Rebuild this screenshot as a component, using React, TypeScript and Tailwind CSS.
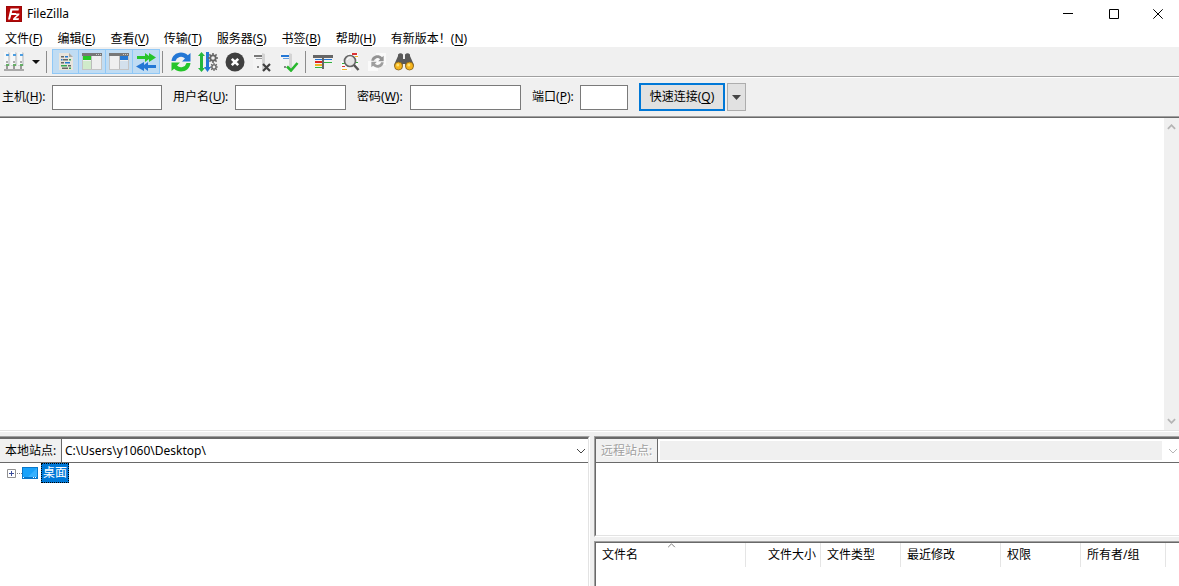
import type { ReactNode } from "react";

const menus = [
  ["文件", "F"],
  ["编辑", "E"],
  ["查看", "V"],
  ["传输", "T"],
  ["服务器", "S"],
  ["书签", "B"],
  ["帮助", "H"],
  ["有新版本！", "N"],
];

function Key({ label, k, colon = false }: { label: string; k: string; colon?: boolean }) {
  return (
    <span className="whitespace-nowrap">
      {label}(<span className="underline underline-offset-2">{k}</span>){colon && ":"}
    </span>
  );
}

function Icon({ children }: { children: ReactNode }) {
  return (
    <svg viewBox="0 0 20 20" className="size-5 shrink-0" aria-hidden="true">
      {children}
    </svg>
  );
}

function Tool({ label, children }: { label: string; children: ReactNode }) {
  return (
    <button type="button" aria-label={label} className="flex h-[26px] w-[27px] items-center justify-center">
      <Icon>{children}</Icon>
    </button>
  );
}

function Toggle({ label, children }: { label: string; children: ReactNode }) {
  return (
    <button
      type="button"
      aria-label={label}
      aria-pressed="true"
      className="flex h-[25px] w-[27px] items-center justify-center border border-l-0 border-[#90c8f6] bg-[#c0dcf3] first:border-l"
    >
      <Icon>{children}</Icon>
    </button>
  );
}

function Separator() {
  return <div className="h-[22px] w-px bg-[#8c8c8c]" />;
}

function Chevron({ up = false, className }: { up?: boolean; className: string }) {
  return (
    <svg viewBox="0 0 10 6" className={className} fill="none" stroke="currentColor" aria-hidden="true">
      <path d={up ? "M1 5 5 1l4 4" : "m1 1 4 4 4-4"} />
    </svg>
  );
}

function Field({ id, label, k, cols }: { id: string; label: string; k: string; cols: string }) {
  return (
    <div className={`grid items-center ${cols}`}>
      <label htmlFor={id}>
        <Key label={label} k={k} colon />
      </label>
      <input
        id={id}
        type={id === "pass" ? "password" : "text"}
        className="h-[25px] w-full border border-[#7a7a7a] bg-white px-1 outline-none"
      />
    </div>
  );
}

function Server({ tint }: { tint: string }) {
  return (
    <>
      <path d="M2 1h8l3 1v17l-3-1H2z" fill="#d4d4d4" />
      <path d="M1 1h9v17H1z" fill="#f4f4f4" />
      <path d="M2 3h8v2H2z" fill={tint} />
      <path d="M4 6h6v1H4z" fill={tint} opacity=".7" />
      <path d="M5 14h2v2H5z" fill="#888" />
    </>
  );
}

function Gear({ x, y, r }: { x: number; y: number; r: number }) {
  return (
    <g transform={`translate(${x} ${y}) scale(${r / 4})`} stroke="#666" fill="none">
      <circle r="2.400" strokeWidth="1.600" />
      <path d="M0-4.500v2M0 2.500v2M-4.500 0h2M2.500 0h2M-3.200-3.200l1.400 1.400M1.800 1.800l1.400 1.400M3.200-3.200 1.800-1.800M-1.800 1.800l-1.400 1.400" strokeWidth="1.400" />
    </g>
  );
}

function RefreshArrows({ top, bottom }: { top: string; bottom: string }) {
  return (
    <>
      <path d="M.5 9C1 4 5 .5 10 .5c2.800 0 5 1 6.800 2.800L19.500 1v8.500H11l3-3A5.600 5.600 0 0 0 4.500 9z" fill={top} />
      <path d="M19.500 11c-.5 5-4.500 8.500-9.500 8.500-2.800 0-5-1-6.800-2.800L.5 19v-8.500H9l-3 3a5.600 5.600 0 0 0 9.500-2.500z" fill={bottom} />
    </>
  );
}

function Pane({ children }: { children: ReactNode }) {
  return (
    <>
      <path d="M0 1h20v17H0z" fill="#c4c4c4" />
      <path d="M1 4h18v13H1z" fill="#efefef" />
      <path d="M0 1h20v3H0z" fill="#777" />
      <path d="M14 2h1v1h-1zM16 2h1v1h-1zM18 2h1v1h-1z" fill="#ccc" />
      {children}
    </>
  );
}

function Toolbar() {
  return (
    <div role="toolbar" aria-label="工具栏" className="flex h-[29px] shrink-0 items-center bg-[#f0f0f0]">
      <button type="button" aria-label="站点管理器" className="flex h-[25px] w-7 items-center justify-center">
        <Icon>
          {[0, 7, 14].map((x) => (
            <g key={x} transform={`translate(${x} 0)`}>
              <path d="M0 0h4l2 1v13H0z" fill="#d0d3d6" />
              <path d="M0 0h4v13H0z" fill="#f5f7f8" />
              <path d="M2 2h3v2H2z" fill="#4c9de0" />
              <path d="M2 9h2v2H2z" fill="#aaa" />
              <path d="M2 14h2v4H2z" fill="#999" />
            </g>
          ))}
          <path d="M0 17h20v2H0z" fill="#aaa" />
          <path d="M2 12h3v2H2zM9 12h3v2H9zM16 12h3v2h-3z" fill="#65ae65" />
        </Icon>
      </button>
      <button type="button" aria-label="站点列表" className="flex h-[25px] w-[15px] items-center justify-center">
        <svg viewBox="0 0 8 4" className="h-1 w-2" aria-hidden="true">
          <path d="M0 0h8L4 4z" fill="#111" />
        </svg>
      </button>
      <div className="pr-[5px] pl-[3px]">
        <Separator />
      </div>
      <div className="flex">
        <Toggle label="消息日志">
          <path d="M3 1h10l4 4v13H3z" fill="#e8e4dc" />
          <path d="M13 1v4h4z" fill="#aaa" />
          <path d="M5 4h3v1.500H5zM7 7h5v1.500H7zM5 10h3v1.500H5zM12 13h3v1.500h-3zM6 15.500h6V17H6z" fill="#666" />
          <path d="M9 4h3v1.500H9zM5 7h1.500v1.500H5zM9 10h5v1.500H9z" fill="#2479d0" />
          <path d="M13 7h2v1.500h-2zM5 13h6v1.500H5zM13 15.500h2V17h-2z" fill="#35a853" />
        </Toggle>
        <Toggle label="本地目录树">
          <Pane>
            <path d="M1 4h8v4H1z" fill="#24c924" />
            <path d="M1 9h8v8H1z" fill="#d0ebca" />
            <path d="M9 4h1v13H9z" fill="#bbb" />
          </Pane>
        </Toggle>
        <Toggle label="远程目录树">
          <Pane>
            <path d="M11 4h8v4h-8z" fill="#2478d4" />
            <path d="M11 9h8v8h-8z" fill="#d3e0ec" />
            <path d="M10 4h1v13h-1z" fill="#bbb" />
          </Pane>
        </Toggle>
        <Toggle label="传输队列">
          <path d="M1 4h8V1l4 3V1l7 4.500L13 10V7l-4 3V7H1z" fill="#26c52b" />
          <path d="M20 13h-8v-3l-4 3v-3l-8 4.500L8 19v-3l4 3v-3h8z" fill="#2477d5" />
        </Toggle>
      </div>
      <div className="pr-1 pl-[2px]">
        <Separator />
      </div>
      <Tool label="刷新">
        <RefreshArrows top="#2477d5" bottom="#25c52b" />
      </Tool>
      <Tool label="处理队列">
        <path d="M3.500 0 7 4H5v12h2l-3.500 4L0 16h2V4H0z" fill="#25b83c" />
        <path d="M8 0h3v15h2l-3.500 5L6 15h2z" fill="#2477d5" />
        <Gear x={15} y={6} r={4.5} />
        <Gear x={16} y={15} r={3.5} />
      </Tool>
      <Tool label="取消">
        <circle cx="10" cy="10" r="9.500" fill="#404040" />
        <path d="m6.800 6.800 6.400 6.400m0-6.400-6.400 6.400" stroke="#fff" strokeWidth="2.600" />
      </Tool>
      <Tool label="断开连接">
        <Server tint="#777" />
        <path d="m11 12 7 7m0-7-7 7" stroke="#404040" strokeWidth="2.200" />
      </Tool>
      <Tool label="重新连接">
        <Server tint="#2477d5" />
        <path d="m8 14.500 4 4 6.500-7.500" stroke="#27b82d" strokeWidth="2.600" fill="none" />
      </Tool>
      <div className="px-[3px]">
        <Separator />
      </div>
      <Tool label="过滤器">
        <path d="M0 3h20v14H0z" fill="#f1f1f1" />
        <path d="M0 3h20v3H0z" fill="#666" />
        <path d="M2 7h7v1H2zM11 7h8v1h-8z" fill="#2477d5" />
        <path d="M2 9h7v2H2z" fill="#d22" />
        <path d="M11 10h8v1h-8zM2 15h7v1H2z" fill="#30b440" />
        <path d="M2 12h7v2H2z" fill="#f0b323" />
        <path d="M9 3h2v14H9z" fill="#666" />
      </Tool>
      <Tool label="目录比较">
        <path d="M8 1h10v13H8zM1 9h10v10H1z" fill="#fafafa" />
        <path d="M12 1h5v2h-5zM2 14h3v1H2z" fill="#d33" />
        <path d="M15 4h3v1h-3zM2 17h5v1H2z" fill="#eeb227" />
        <path d="M15 10h3v1h-3zM2 11h3v1H2z" fill="#32ad3b" />
        <circle cx="10" cy="9" r="5.500" fill="#e4e4e4" stroke="#666" strokeWidth="1.700" />
        <path d="M7 8a3.500 3.500 0 0 1 3.500-2.500" fill="none" stroke="#fff" />
        <path d="m14 13 4.500 5" stroke="#555" strokeWidth="2.500" />
      </Tool>
      <Tool label="同步浏览">
        <path d="M9 1h10v12H9zM1 9h10v10H1z" fill="#fafafa" />
        <g transform="translate(4 3) scale(.65)">
          <RefreshArrows top="#929292" bottom="#9e9e9e" />
        </g>
      </Tool>
      <Tool label="搜索">
        <path d="M4 4V2.500Q6.500 0 9 2.500V7h2V2.500Q13.500 0 16 2.500V4l4 9-2 4h-6l-1-5H9l-1 5H2l-2-4z" fill="#595959" />
        <circle cx="4.500" cy="14" r="4" fill="#f7b51d" stroke="#806020" strokeWidth=".8" />
        <circle cx="15.500" cy="14" r="4" fill="#f7b51d" stroke="#806020" strokeWidth=".8" />
        <circle cx="3.800" cy="13" r="1.500" fill="#ffe272" />
        <circle cx="14.800" cy="13" r="1.500" fill="#ffe272" />
      </Tool>
    </div>
  );
}

const columns = [
  { name: "文件名", cls: "w-[150px] text-left" },
  { name: "文件大小", cls: "w-[75px] text-right" },
  { name: "文件类型", cls: "w-[80px] text-left" },
  { name: "最近修改", cls: "w-[100px] text-left" },
  { name: "权限", cls: "w-[80px] text-left" },
  { name: "所有者/组", cls: "w-[85px] text-left" },
];

export default function App() {
  return (
    <div className="flex h-screen flex-col overflow-hidden bg-white font-['Noto_Sans','Noto_Sans_CJK_SC',sans-serif] text-xs leading-4 text-black">
      <header className="flex h-[27px] shrink-0 items-center justify-between pl-[6px]">
        <div className="flex items-center gap-[5px]">
          <svg viewBox="0 0 16 16" className="size-4" aria-hidden="true">
            <path d="M0 0h16v16H0z" fill="#b50808" />
            <path d="M.5.500h15v15H.500z" fill="none" stroke="#850808" strokeDasharray="1 1" />
            <path d="M4.500 2.500H13L12.500 4.500H6.300L5.800 7H10l-.4 2H5.300L4 13.500H2zM8 7.500h5.500l-.3 1.500-3.700 3.200H13l-.4 1.700H7l.3-1.600L10.800 9H8z" fill="#fff" />
          </svg>
          <h1>FileZilla</h1>
        </div>
        <div className="flex">
          <button type="button" aria-label="最小化" className="flex h-[27px] w-[45px] items-center justify-center">
            <svg viewBox="0 0 11 11" className="size-[11px]" aria-hidden="true">
              <path d="M0 5h10v1H0z" />
            </svg>
          </button>
          <button type="button" aria-label="最大化" className="flex h-[27px] w-[46px] items-center justify-center">
            <svg viewBox="0 0 10 10" className="size-[10px]" fill="none" stroke="black" aria-hidden="true">
              <path d="M.5.500h9v9H.500z" />
            </svg>
          </button>
          <button type="button" aria-label="关闭" className="flex h-[27px] w-[42px] items-center justify-center">
            <svg viewBox="0 0 10 10" className="size-[10px]" fill="none" stroke="black" aria-hidden="true">
              <path d="m.3.300 9.400 9.400m0-9.400L.3 9.700" />
            </svg>
          </button>
        </div>
      </header>

      <nav className="flex h-5 shrink-0 items-center gap-[15px] pt-1 pl-[5px]">
        {menus.map(([label, k]) => (
          <button key={k} type="button">
            <Key label={label} k={k} />
          </button>
        ))}
      </nav>

      <Toolbar />

      <form
        className="flex shrink-0 items-center gap-[11px] border-t border-b border-[#a0a0a0] bg-[#f0f0f0] pt-[6px] pb-[5px] pl-[2px] shadow-[inset_0_1px_#fff]"
        onSubmit={(e) => e.preventDefault()}
      >
        <Field id="host" label="主机" k="H" cols="grid-cols-[50px_110px]" />
        <Field id="user" label="用户名" k="U" cols="grid-cols-[62px_111px]" />
        <Field id="pass" label="密码" k="W" cols="grid-cols-[53px_111px]" />
        <Field id="port" label="端口" k="P" cols="grid-cols-[48px_48px]" />
        <div className="flex gap-[2px]">
          <button type="submit" className="h-7 w-[86px] border-2 border-[#0078d7] bg-[#e1e1e1]">
            <Key label="快速连接" k="Q" />
          </button>
          <button
            type="button"
            aria-label="连接历史"
            className="flex h-7 w-[19px] items-center justify-center border border-[#adadad] bg-[#e1e1e1]"
          >
            <svg viewBox="0 0 9 5" className="h-[5px] w-[9px]" aria-hidden="true">
              <path d="M0 0h9L4.500 5z" fill="#444" />
            </svg>
          </button>
        </div>
      </form>

      <section aria-label="消息日志" className="flex min-h-0 flex-1 justify-end border-t border-b border-t-[#696969] border-b-[#e3e3e3]">
        <div className="flex w-[15px] flex-col items-center justify-between bg-[#f0f0f0] py-[6px] text-[#b5b5b5]">
          <button type="button" aria-label="向上滚动">
            <Chevron up className="h-[6px] w-[9px] stroke-2" />
          </button>
          <button type="button" aria-label="向下滚动">
            <Chevron className="h-[6px] w-[9px] stroke-2" />
          </button>
        </div>
      </section>

      <main className="grid h-[155px] shrink-0 grid-cols-[590fr_585fr] gap-1 border-t border-white bg-[#f0f0f0] pt-1">
        <section aria-label="本地站点" className="flex flex-col border-t border-r border-t-[#a0a0a0] border-r-white">
          <div className="flex flex-1 flex-col border-t border-r border-t-[#696969] border-r-[#e3e3e3] bg-white">
            <div className="flex h-[25px] border-t border-b border-[#696969]">
              <label htmlFor="local" className="flex w-[62px] items-center border-r border-[#696969] bg-[#f0f0f0] pl-[5px] whitespace-nowrap">
                本地站点:
              </label>
              <div className="relative flex flex-1">
                <select id="local" className="w-full appearance-none bg-white pr-5 pl-[3px] outline-none">
                  <option>C:\Users\y1060\Desktop\</option>
                </select>
                <Chevron className="pointer-events-none absolute top-[9px] right-[2px] h-[6px] w-[10px] text-[#444]" />
              </div>
            </div>
            <div role="tree" className="flex flex-1 items-start pl-[7px]">
              <div role="treeitem" className="flex h-5 items-center">
                <svg viewBox="0 0 15 9" className="h-[9px] w-[15px]" fill="none" aria-hidden="true">
                  <path d="M.5.500h8v8h-8z" fill="#fff" stroke="#919191" />
                  <path d="M2 4.500h5M4.500 2v5" stroke="#3b4c9a" />
                  <path d="M10 4.500h5" stroke="#888" strokeDasharray="1 1" />
                </svg>
                <svg viewBox="0 0 16 12" className="mr-[3px] h-3 w-4" aria-hidden="true">
                  <path d="M0 0h16v12H0z" fill="#0877cb" />
                  <path d="M1 1h14v9H1z" fill="#19a2fa" />
                  <path d="M15 1v9H6z" fill="#36b1ff" />
                  <path d="M1 10h1v1H1zM11 10h1v1h-1zM13 10h1v1h-1z" fill="#fff" />
                </svg>
                <span className="flex h-5 w-7 items-center justify-center bg-[#0078d7] whitespace-nowrap text-white outline -outline-offset-1 outline-dotted outline-black">
                  桌面
                </span>
              </div>
            </div>
          </div>
        </section>

        <div className="flex min-w-0 flex-col gap-1">
          <section aria-label="远程站点" className="flex h-[101px] flex-col border-t border-b border-l border-t-[#a0a0a0] border-b-white border-l-[#a0a0a0]">
            <div className="flex flex-1 flex-col border-t border-b border-l border-t-[#696969] border-b-[#e3e3e3] border-l-[#696969] bg-white">
              <div className="flex h-[25px] border-t border-b border-[#696969]">
                <label
                  htmlFor="remote"
                  className="flex w-[62px] items-center border-r border-[#696969] bg-[#f0f0f0] pl-[5px] whitespace-nowrap text-[#a0a0a0] text-shadow-[1px_1px_#fff]"
                >
                  远程站点:
                </label>
                <div className="flex flex-1 items-center py-[2px] pr-px pl-[2px]">
                  <select id="remote" disabled className="h-full flex-1 appearance-none bg-[#f0f0f0]" />
                  <Chevron className="ml-[6px] h-[6px] w-[10px] text-[#b5b5b5]" />
                </div>
              </div>
            </div>
          </section>
          <section aria-label="远程文件" className="flex-1 border-t border-l border-[#a0a0a0]">
            <div className="h-full overflow-hidden border-t border-l border-[#696969] bg-white">
              <table className="w-[570px] table-fixed border-separate border-spacing-0">
                <thead>
                  <tr className="h-6">
                    {columns.map((c, i) => (
                      <th key={c.name} scope="col" className={`relative border-r border-[#e5e5e5] pr-1 pl-[6px] font-normal whitespace-nowrap ${c.cls}`}>
                        {c.name}
                        {i === 0 && <Chevron up className="absolute top-0 left-[71px] h-[5px] w-[9px] text-[#666]" />}
                      </th>
                    ))}
                  </tr>
                </thead>
              </table>
            </div>
          </section>
        </div>
      </main>
    </div>
  );
}
